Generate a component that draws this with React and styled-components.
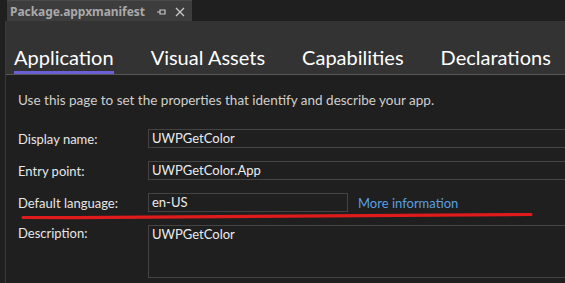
import React from "react";
import styled, { createGlobalStyle } from "styled-components";

const GlobalStyle = createGlobalStyle`
  html, body {
    margin: 0;
    padding: 0;
    background: #1f1f1f;
    overflow: hidden;
  }
  body {
    font-family: Lato, "Open Sans", sans-serif;
  }
`;

const sections = ["Application", "Visual Assets", "Capabilities", "Declarations"];

const fields = [
  { label: "Display name:", value: "UWPGetColor", width: "auto" },
  { label: "Entry point:", value: "UWPGetColor.App", width: "auto" },
  { label: "Default language:", value: "en-US", width: "200px", link: "More information" },
];

function PinIcon() {
  return (
    <svg width="10" height="10" viewBox="0 0 10 10">
      <path d="M1 5h3M4 2.5v5M4 3h5v4H4" stroke="#c8c8c8" strokeWidth="1.2" fill="none" />
    </svg>
  );
}

function CloseIcon() {
  return (
    <svg width="10" height="10" viewBox="0 0 10 10">
      <path d="M1 1l8 8M9 1l-8 8" stroke="#c8c8c8" strokeWidth="1.3" />
    </svg>
  );
}

function App() {
  return (
    <>
      <GlobalStyle />
      <Page>
        <TabStrip>
          <DocTab>
            <span>Package.appxmanifest</span>
            <TabButtons>
              <PinIcon />
              <CloseIcon />
            </TabButtons>
          </DocTab>
        </TabStrip>
        <Editor>
          <Header>
            {sections.map((s, i) => (
              <Section key={s} active={i === 0}>
                {s}
              </Section>
            ))}
          </Header>
          <Body>
            <Intro>Use this page to set the properties that identify and describe your app.</Intro>
            <Form>
              {fields.map((f) => (
                <Row key={f.label}>
                  <Label>{f.label}</Label>
                  <Field width={f.width}>{f.value}</Field>
                  {f.link && <Link>{f.link}</Link>}
                </Row>
              ))}
              <Row top>
                <Label>Description:</Label>
                <Field tall>UWPGetColor</Field>
              </Row>
            </Form>
          </Body>
        </Editor>
        <Annotation width="565" height="283" viewBox="0 0 565 283">
          <path d="M23 217.5 C 200 218, 380 216, 531 214.5" stroke="#e01b1b" strokeWidth="3.2" strokeLinecap="round" fill="none" />
        </Annotation>
      </Page>
    </>
  );
}

export default App;

const Page = styled.div`
  position: relative;
  width: 565px;
  height: 283px;
  overflow: hidden;
  background: #1f1f1f;
`;

const TabStrip = styled.div`
  height: 21px;
  padding-left: 7px;
  display: flex;
  background: #1f1f1f;
`;

const DocTab = styled.div`
  width: 185px;
  box-sizing: border-box;
  background: #3d3d3d;
  border-top: 1px solid #4a4a4a;
  display: flex;
  align-items: center;
  padding-left: 3px;
  font-family: "Noto Sans", sans-serif;
  font-weight: 700;
  font-size: 12px;
  color: #a9a9a9;
  letter-spacing: -0.05px;
`;

const TabButtons = styled.div`
  display: flex;
  align-items: center;
  gap: 9px;
  margin-left: 11px;
  padding-top: 2px;
`;

const Editor = styled.div`
  margin-left: 5px;
  border-left: 1px solid #3a3a3a;
  height: 262px;
`;

const Header = styled.div`
  height: 53px;
  background: #333333;
  border-bottom: 1px solid #575757;
  display: flex;
  align-items: flex-end;
  padding-left: 8px;
  gap: 37px;
`;

const Section = styled.div`
  font-size: 20px;
  color: #ffffff;
  padding-bottom: 1px;
  line-height: 26px;
  border-bottom: 3px solid ${(p) => (p.active ? "#6b5fd6" : "transparent")};
`;

const Body = styled.div`
  padding: 17px 0 0 12px;
`;

const Intro = styled.div`
  font-size: 13.5px;
  color: #cfcfcf;
  line-height: 16px;
`;

const Form = styled.div`
  margin-top: 21px;
  display: flex;
  flex-direction: column;
  gap: 13px;
`;

const Row = styled.div`
  display: flex;
  align-items: ${(p) => (p.top ? "flex-start" : "center")};
`;

const Label = styled.div`
  width: 130px;
  flex-shrink: 0;
  font-size: 13px;
  color: #e6e6e6;
`;

const Field = styled.div`
  box-sizing: border-box;
  height: ${(p) => (p.tall ? "53px" : "19px")};
  width: ${(p) => p.width || "auto"};
  flex: ${(p) => (p.width && p.width !== "auto" ? "0 0 auto" : "1 1 auto")};
  margin-right: ${(p) => (p.width && p.width !== "auto" ? "0" : "-10px")};
  border: 1px solid #444444;
  padding: 1px 3px;
  font-size: 13px;
  line-height: 15px;
  color: #ececec;
`;

const Link = styled.div`
  margin-left: 10px;
  font-size: 13px;
  color: #5a9fe0;
`;

const Annotation = styled.svg`
  position: absolute;
  left: 0;
  top: 0;
  pointer-events: none;
`;
